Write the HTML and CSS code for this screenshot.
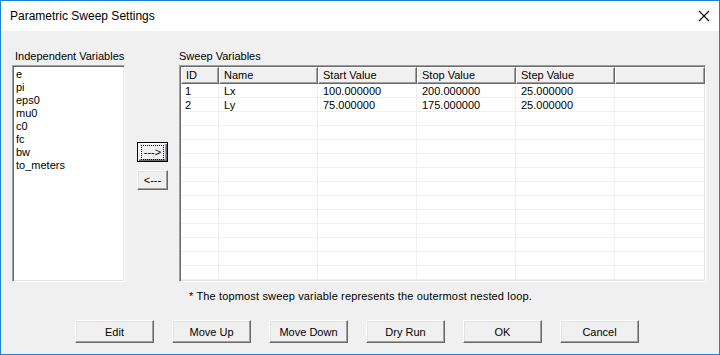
FILE: index.html
```html
<!DOCTYPE html>
<html>
<head>
<meta charset="utf-8">
<link rel="stylesheet" href="styles.css">
</head>
<body>
<div class="window">
  <div class="titlebar">
    <span class="title">Parametric Sweep Settings</span>
    <svg class="close" width="12" height="12" viewBox="0 0 12 12"><path d="M1 1 L11 11 M11 1 L1 11" stroke="#000" stroke-width="1.1" fill="none"/></svg>
  </div>
  <div class="main">
    <div class="leftcol">
      <div class="label pad">Independent Variables</div>
      <div class="listbox">
        <div class="item">e</div>
        <div class="item">pi</div>
        <div class="item">eps0</div>
        <div class="item">mu0</div>
        <div class="item">c0</div>
        <div class="item">fc</div>
        <div class="item">bw</div>
        <div class="item">to_meters</div>
      </div>
    </div>
    <div class="midcol">
      <button class="btn small default"><span class="focus">---&gt;</span></button>
      <button class="btn small">&lt;---</button>
    </div>
    <div class="rightcol">
      <div class="label">Sweep Variables</div>
      <div class="grid">
        <div class="row head">
          <div class="c c1">ID</div><div class="c c2">Name</div><div class="c c3">Start Value</div><div class="c c4">Stop Value</div><div class="c c5">Step Value</div><div class="c c6"></div>
        </div>
        <div class="row"><div class="c c1">1</div><div class="c c2">Lx</div><div class="c c3">100.000000</div><div class="c c4">200.000000</div><div class="c c5">25.000000</div><div class="c c6"></div></div>
        <div class="row"><div class="c c1">2</div><div class="c c2">Ly</div><div class="c c3">75.000000</div><div class="c c4">175.000000</div><div class="c c5">25.000000</div><div class="c c6"></div></div>
        <div class="row"><div class="c c1"></div><div class="c c2"></div><div class="c c3"></div><div class="c c4"></div><div class="c c5"></div><div class="c c6"></div></div>
        <div class="row"><div class="c c1"></div><div class="c c2"></div><div class="c c3"></div><div class="c c4"></div><div class="c c5"></div><div class="c c6"></div></div>
        <div class="row"><div class="c c1"></div><div class="c c2"></div><div class="c c3"></div><div class="c c4"></div><div class="c c5"></div><div class="c c6"></div></div>
        <div class="row"><div class="c c1"></div><div class="c c2"></div><div class="c c3"></div><div class="c c4"></div><div class="c c5"></div><div class="c c6"></div></div>
        <div class="row"><div class="c c1"></div><div class="c c2"></div><div class="c c3"></div><div class="c c4"></div><div class="c c5"></div><div class="c c6"></div></div>
        <div class="row"><div class="c c1"></div><div class="c c2"></div><div class="c c3"></div><div class="c c4"></div><div class="c c5"></div><div class="c c6"></div></div>
        <div class="row"><div class="c c1"></div><div class="c c2"></div><div class="c c3"></div><div class="c c4"></div><div class="c c5"></div><div class="c c6"></div></div>
        <div class="row"><div class="c c1"></div><div class="c c2"></div><div class="c c3"></div><div class="c c4"></div><div class="c c5"></div><div class="c c6"></div></div>
        <div class="row"><div class="c c1"></div><div class="c c2"></div><div class="c c3"></div><div class="c c4"></div><div class="c c5"></div><div class="c c6"></div></div>
        <div class="row"><div class="c c1"></div><div class="c c2"></div><div class="c c3"></div><div class="c c4"></div><div class="c c5"></div><div class="c c6"></div></div>
        <div class="row"><div class="c c1"></div><div class="c c2"></div><div class="c c3"></div><div class="c c4"></div><div class="c c5"></div><div class="c c6"></div></div>
        <div class="row"><div class="c c1"></div><div class="c c2"></div><div class="c c3"></div><div class="c c4"></div><div class="c c5"></div><div class="c c6"></div></div>
      </div>
    </div>
  </div>
  <div class="note">* The topmost sweep variable represents the outermost nested loop.</div>
  <div class="buttons">
    <button class="btn">Edit</button>
    <button class="btn">Move Up</button>
    <button class="btn">Move Down</button>
    <button class="btn">Dry Run</button>
    <button class="btn">OK</button>
    <button class="btn">Cancel</button>
  </div>
</div>
</body>
</html>
```
FILE: styles.css
```css
html, body {
  margin: 0;
  padding: 0;
  background: #ffffff;
}
body {
  font-family: "Liberation Sans", Arial, sans-serif;
  font-size: 11px;
  color: #000;
}
.window {
  width: 720px;
  height: 355px;
  box-sizing: border-box;
  border: 1px solid #1883d7;
  background: #f0f0f0;
  display: flex;
  flex-direction: column;
}
.titlebar {
  height: 30px;
  flex: none;
  background: #fff;
  display: flex;
  align-items: center;
  justify-content: space-between;
  padding: 0 9px 0 8px;
}
.title {
  font-size: 12px;
  color: #000;
  padding-left: 1px;
}
.close {
  display: block;
  margin-right: 0;
}
.main {
  display: flex;
  padding: 18px 0 0 11px;
  flex: none;
  box-sizing: border-box;
}
.label {
  height: 15px;
  line-height: 15px;
  white-space: nowrap;
}
.label.pad {
  padding-left: 3px;
}
.leftcol {
  width: 113px;
  flex: none;
}
.listbox {
  margin-top: 1px;
  height: 217px;
  box-sizing: border-box;
  background: #fff;
  border-style: solid;
  border-width: 1px;
  border-color: #a0a0a0 #fff #fff #a0a0a0;
  box-shadow: inset 1px 1px 0 #696969, inset -1px -1px 0 #e3e3e3;
  padding: 2px 0 0 3px;
}
.item {
  height: 13px;
  line-height: 13px;
}
.midcol {
  width: 54px;
  flex: none;
  display: flex;
  flex-direction: column;
  align-items: flex-start;
  padding: 93px 0 0 12px;
  box-sizing: border-box;
  gap: 8px;
}
.btn {
  font-family: "Liberation Sans", Arial, sans-serif;
  font-size: 11px;
  color: #000;
  background: #f0f0f0;
  border-style: solid;
  border-width: 1px;
  border-color: #fff #696969 #696969 #fff;
  box-shadow: inset -1px -1px 0 #a0a0a0, inset 1px 1px 0 #e3e3e3;
  width: 79px;
  height: 23px;
  padding: 0;
  margin: 0;
  display: flex;
  align-items: center;
  justify-content: center;
}
.btn.small {
  width: 31px;
  height: 20px;
}
.btn.default {
  border-color: #000;
  box-shadow: inset 1px 1px 0 #fff, inset -1px -1px 0 #696969, inset -2px -2px 0 #a0a0a0;
}
.focus {
  outline: 1px dotted #000;
  outline-offset: 0;
  padding: 1px 2px;
  line-height: 11px;
  display: inline-block;
}
.rightcol {
  flex: none;
  width: 527px;
}
.grid {
  margin-top: 1px;
  height: 217px;
  box-sizing: border-box;
  background: #fff;
  border-style: solid;
  border-width: 1px;
  border-color: #a0a0a0 #fff #fff #a0a0a0;
  box-shadow: inset 1px 1px 0 #696969, inset -1px -1px 0 #e3e3e3;
  padding: 1px 1px 0 1px;
  overflow: hidden;
}
.row {
  display: flex;
  height: 14px;
  box-sizing: border-box;
  border-bottom: 1px solid #f0f0f0;
}
.c {
  flex: none;
  box-sizing: border-box;
  border-right: 1px solid #f0f0f0;
  padding-left: 5px;
  padding-top: 1px;
  line-height: 12px;
  white-space: nowrap;
  overflow: hidden;
}
.c1 { width: 38px; padding-left: 4px; }
.c2 { width: 99px; }
.c3 { width: 99px; }
.c4 { width: 99px; }
.c5 { width: 99px; }
.c6 { width: 90px; border-right: none; }
.row.head {
  height: 17px;
  border-bottom: none;
  background: #f0f0f0;
}
.row.head .c {
  line-height: 15px;
  padding-top: 0;
  border-style: solid;
  border-width: 1px;
  border-color: #fff #696969 #696969 #fff;
  box-shadow: inset -1px -1px 0 #a0a0a0;
  padding-left: 4px;
}
.note {
  height: 13px;
  line-height: 13px;
  padding-left: 188px;
  flex: none;
  margin-top: 8px;
  letter-spacing: 0.15px;
}
.buttons {
  display: flex;
  gap: 18px;
  padding-left: 74px;
  margin-top: 17px;
}
```
